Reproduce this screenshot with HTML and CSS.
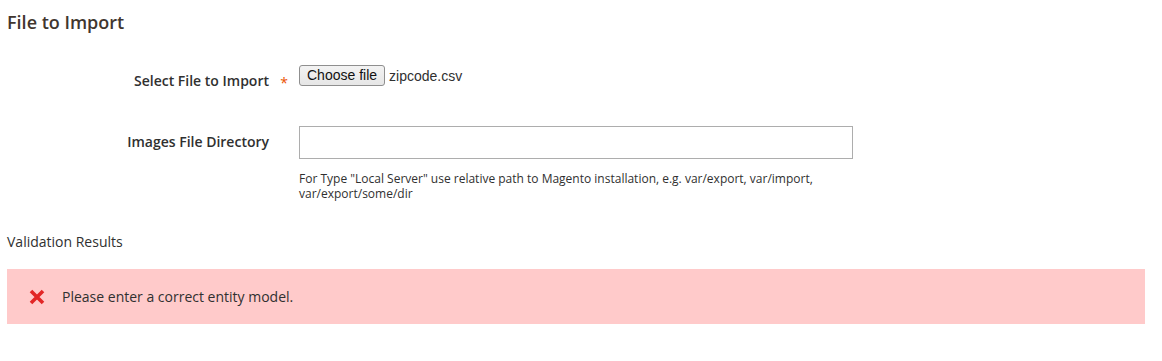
FILE: index.html
```html
<!DOCTYPE html>
<html>
<head>
<meta charset="utf-8">
<link rel="stylesheet" href="styles.css">
</head>
<body>
<div class="page">
  <h2 class="legend">File to Import</h2>
  <div class="field field-file">
    <div class="label">Select File to Import</div>
    <div class="req">*</div>
    <div class="control file-control">
      <span class="file-btn">Choose file</span>
      <span class="file-name">zipcode.csv</span>
    </div>
  </div>
  <div class="field field-dir">
    <div class="label">Images File Directory</div>
    <div class="req"></div>
    <div class="control">
      <div class="text-input"></div>
      <div class="note">For Type "Local Server" use relative path to Magento installation, e.g. var/export, var/import, var/export/some/dir</div>
    </div>
  </div>
  <div class="results-title">Validation Results</div>
  <div class="message-error">
    <svg class="err-icon" width="16" height="16" viewBox="0 0 16 16"><path d="M2 2 L14 14 M14 2 L2 14" stroke="#e22626" stroke-width="3.6" fill="none"/></svg>
    <span>Please enter a correct entity model.</span>
  </div>
</div>
</body>
</html>
```
FILE: styles.css
```css
html, body {
  margin: 0;
  padding: 0;
  background: #fff;
}
body {
  font-family: "Open Sans", "Noto Sans", sans-serif;
  color: #303030;
  font-size: 14px;
}
.page {
  padding: 11px 17px 0 7px;
}
.legend {
  margin: 0;
  font-size: 18px;
  font-weight: 600;
  color: #41362f;
  line-height: 22px;
}
.field {
  display: grid;
  grid-template-columns: 262px 30px 554px;
}
.field-file {
  margin-top: 32px;
}
.field-dir {
  margin-top: 33px;
}
.label {
  text-align: right;
  font-weight: 600;
  font-size: 14px;
  line-height: 20px;
  padding-top: 6px;
}
.req {
  color: #eb5202;
  text-align: center;
  font-size: 14px;
  line-height: 20px;
  padding-top: 8px;
}
.file-control {
  display: flex;
  align-items: center;
  align-self: start;
  font-family: "Liberation Sans", Arial, sans-serif;
  font-size: 14px;
}
.file-btn {
  display: inline-block;
  box-sizing: border-box;
  height: 21px;
  line-height: 19px;
  padding: 0 7px;
  background: linear-gradient(#f3f3f3, #e6e6e6);
  border: 1px solid #8f8f8f;
  border-radius: 3px;
  color: #111;
}
.file-name {
  margin-left: 4px;
  color: #303030;
}
.text-input {
  box-sizing: border-box;
  height: 33px;
  border: 1px solid #adadad;
  background: #fff;
}
.note {
  font-size: 12px;
  line-height: 15px;
  margin-top: 12px;
  padding-right: 20px;
}
.results-title {
  margin-top: 31px;
  line-height: 20px;
}
.message-error {
  margin-top: 17px;
  background: #ffcaca;
  height: 55px;
  display: flex;
  align-items: center;
  padding-left: 22px;
}
.err-icon {
  flex: none;
  margin-right: 17px;
}
```
